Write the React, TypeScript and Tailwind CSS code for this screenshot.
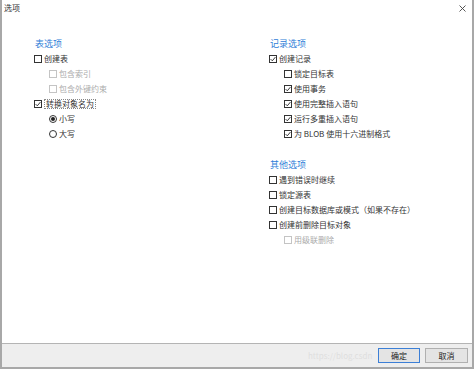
import type { ReactNode } from 'react';

const Check = ({ checked, disabled }: { checked?: boolean; disabled?: boolean }) => (
  <span
    className={`flex items-center justify-center w-[8px] h-[8px] border bg-white shrink-0 ${
      disabled ? 'border-[#c4c4c4]' : 'border-[#333333]'
    }`}
  >
    {checked && (
      <svg width="6" height="6" viewBox="0 0 6 6">
        <path d="M0.6 3.1 L2.3 4.8 L5.4 1.1" fill="none" stroke="#222" strokeWidth="0.9" />
      </svg>
    )}
  </span>
);

const Radio = ({ checked }: { checked?: boolean }) => (
  <span className="flex items-center justify-center w-[8px] h-[8px] rounded-full border border-[#333333] bg-white shrink-0">
    {checked && <span className="w-[4px] h-[4px] rounded-full bg-[#222]" />}
  </span>
);

const Row = ({ children, indent }: { children: ReactNode; indent?: boolean }) => (
  <div className={`flex items-center gap-[2px] h-[15px] ${indent ? 'pl-[15px]' : ''}`}>{children}</div>
);

const Header = ({ children }: { children: ReactNode }) => (
  <div className="flex items-center h-[15px] pl-[1px] text-[9px] text-[#2f80d8]">{children}</div>
);

const Item = ({
  label,
  checked,
  disabled,
  indent,
}: {
  label: string;
  checked?: boolean;
  disabled?: boolean;
  indent?: boolean;
}) => (
  <Row indent={indent}>
    <Check checked={checked} disabled={disabled} />
    <span className={disabled ? 'text-[#ababab]' : 'text-[#333]'}>{label}</span>
  </Row>
);

export default function App() {
  return (
    <div
      className="relative w-[474px] h-[369px] flex flex-col bg-white border-l-2 border-r-2 border-b-2 border-[#a8a8a8] text-[8px] leading-none"
      style={{ fontFamily: '"Noto Sans CJK SC", "Noto Sans", sans-serif' }}
    >
      {/* title bar */}
      <div className="flex items-center justify-between h-[14px] pl-[2px] pr-[6px] pt-[2px]">
        <span className="text-[#333]">选项</span>
        <svg width="7" height="7" viewBox="0 0 7 7">
          <path d="M0.5 0.5 L6.5 6.5 M6.5 0.5 L0.5 6.5" stroke="#444" strokeWidth="0.9" />
        </svg>
      </div>

      {/* body */}
      <div className="flex-1 grid grid-cols-[235px_1fr] pl-[32px] pt-[22px]">
        <div className="flex flex-col">
          <Header>表选项</Header>
          <Item label="创建表" />
          <Item label="包含索引" disabled indent />
          <Item label="包含外键约束" disabled indent />
          <Row>
            <Check checked />
            <span className="border border-dotted border-[#888] px-[1px] text-[#333]">转换对象名为</span>
          </Row>
          <Row indent>
            <Radio checked />
            <span className="text-[#333]">小写</span>
          </Row>
          <Row indent>
            <Radio />
            <span className="text-[#333]">大写</span>
          </Row>
        </div>

        <div className="flex flex-col">
          <Header>记录选项</Header>
          <Item label="创建记录" checked />
          <Item label="锁定目标表" indent />
          <Item label="使用事务" checked indent />
          <Item label="使用完整插入语句" checked indent />
          <Item label="运行多重插入语句" checked indent />
          <Item label="为 BLOB 使用十六进制格式" checked indent />

          <div className="mt-[16px]">
            <Header>其他选项</Header>
            <Item label="遇到错误时继续" />
            <Item label="锁定源表" />
            <Item label="创建目标数据库或模式（如果不存在）" />
            <Item label="创建前删除目标对象" />
            <Item label="用级联删除" disabled indent />
          </div>
        </div>
      </div>

      {/* footer */}
      <div className="flex items-center justify-end gap-[5px] h-[24px] pr-[4px] border-t border-[#b4b4b4] bg-[#eeeeee]">
        <button className="w-[42px] h-[15px] flex items-center justify-center border border-[#3c7fd6] bg-[#e4e4e4] text-[#222] text-[8px]">
          确定
        </button>
        <button className="w-[43px] h-[15px] flex items-center justify-center border border-[#b0b0b0] bg-[#e4e4e4] text-[#222] text-[8px]">
          取消
        </button>
      </div>

      {/* watermark */}
      <span className="absolute left-[306px] top-[352px] text-[8px] text-[#dedede] pointer-events-none">
        https://blog.csdn
      </span>
    </div>
  );
}
